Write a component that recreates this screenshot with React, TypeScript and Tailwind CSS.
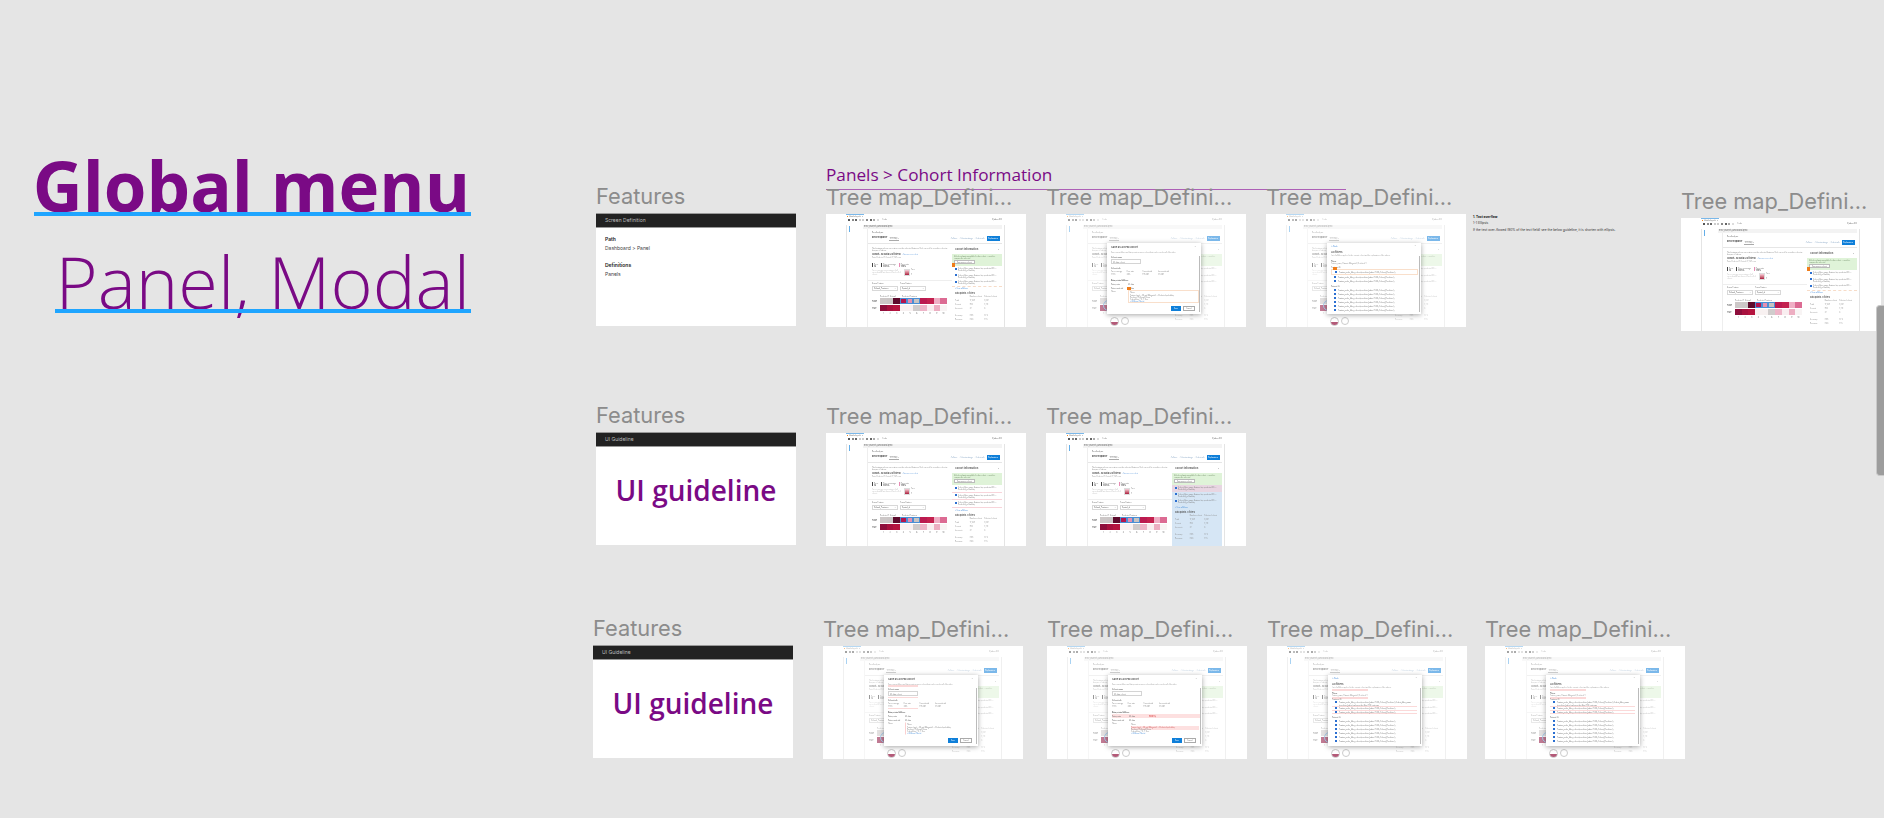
import type { ReactNode } from 'react';

const HEAT_TOP = ['bg-[#cdc8c8]', 'bg-[#cbc6c6]', 'bg-[#5e0b2c]', 'bg-[#b5134c]', 'bg-[#e58fb0]', 'bg-[#c6c3c3]', 'bg-[#bb1a50]', 'bg-[#c4214f]', 'bg-[#efafc5]', 'bg-[#dc6b93]'];
const HEAT_BOTTOM = ['bg-[#8e0f3c]', 'bg-[#a8123f]', 'bg-[#b5143f]', 'bg-[#f8f1f1]', 'bg-[#f8f1f1]', 'bg-[#d0cccc]', 'bg-[#eeb4c8]', 'bg-[#f9eef0]', 'bg-[#edaec2]', 'bg-[#f8f4f4]'];

type Panel = 'plain' | 'pink' | 'blue';
type Modal = 'none' | 'save' | 'savePink' | 'saveRed' | 'filters' | 'filtersPink';

function Toolbar() {
  return (
    <div className="flex h-[11px] flex-col">
      <div className="flex h-[4.5px] items-start pl-[20px]">
        <div className="flex h-[4px] w-[18px] items-center gap-[1px] border-t-[0.7px] border-t-[#7ab8ea] pl-[1px]">
          <span className="h-[1.5px] w-[1.5px] bg-[#f08a24]" />
          <span className="text-[1.8px] leading-none text-[#666]">Untitled.ipynb</span>
          <span className="ml-auto mr-[1px] text-[1.8px] leading-none text-[#222]">×</span>
        </div>
      </div>
      <div className="flex items-center gap-[1.6px] pl-[22px] pr-[24px]">
        {['bg-[#555]', 'bg-[#888]', 'bg-[#666]', 'bg-[#ccc]', 'bg-[#ccc]', 'bg-[#888]', 'bg-[#666]', 'bg-[#aaa]', 'bg-[#ddd]'].map((c, i) => (
          <span key={i} className={`h-[2px] w-[2px] ${c}`} />
        ))}
        <span className="ml-[2px] text-[1.8px] leading-none text-[#777]">Code</span>
        <span className="ml-auto text-[1.8px] leading-none text-[#555]">Python 3 ○</span>
      </div>
    </div>
  );
}

function Stat({ bar, label, value }: { bar: string; label: string; value: string }) {
  return (
    <div className={`flex flex-col border-l-[1px] pl-[1px] ${bar}`}>
      <span className="text-[1.8px] leading-[2.2px] text-[#777]">{label}</span>
      <span className="text-[1.9px] font-bold leading-[2.2px] text-[#444]">{value}</span>
    </div>
  );
}

function Heatmap() {
  return (
    <div className="mt-[4px] flex flex-col">
      <div className="flex pl-[8px]">
        <span className="w-[22px] text-[1.7px] leading-[3px] text-[#777]">Predicted Y (Actual)</span>
        <span className="text-[1.7px] leading-[3px] text-[#777]">Predicted Features</span>
      </div>
      <div className="flex items-center">
        <span className="w-[8px] shrink-0 text-[2px] font-medium text-[#555]">False</span>
        <div className="flex">
          {HEAT_TOP.map((c, i) => (
            <div key={i} className={`h-[6.5px] w-[6.7px] ${c} ${i >= 3 && i <= 5 ? 'border-[0.7px] border-[#4a8ed4]' : ''}`} />
          ))}
        </div>
      </div>
      <div className="mt-[0.5px] flex items-center">
        <span className="w-[8px] shrink-0 text-[2px] font-medium text-[#555]">True</span>
        <div className="flex">
          {HEAT_BOTTOM.map((c, i) => (
            <div key={i} className={`h-[6.5px] w-[6.7px] ${c}`} />
          ))}
        </div>
      </div>
      <div className="mt-[1.5px] flex pl-[8px]">
        {['1', '2', '3', '4', '5', '6', '7', '8', '9', '10'].map((n) => (
          <span key={n} className="w-[6.7px] text-center text-[1.8px] leading-none text-[#666]">{n}</span>
        ))}
      </div>
    </div>
  );
}

function CohortFilter({ pink, tag }: { pink?: boolean; tag?: boolean }) {
  return (
    <div className={`flex gap-[1.5px] px-[3px] py-[1.2px] ${pink ? 'border-b-[0.8px] border-b-[#f8d4da]' : ''} ${tag ? 'bg-[#e8d6e2]' : ''}`}>
      <span className="mt-[0.4px] h-[2.2px] w-[1.6px] shrink-0 bg-[#2b6fd1]" />
      <span className="text-[1.7px] leading-[2.1px] text-[#777]">Cohort_filter_name (feature) top predicted 34 — Predicted_probability</span>
    </div>
  );
}

function CohortPanel({ variant, dim }: { variant: Panel; dim?: boolean }) {
  const blue = variant === 'blue';
  return (
    <div className={`ml-auto flex w-[50px] shrink-0 flex-col ${blue ? 'bg-[#d6e6f5]' : 'bg-white'}`}>
      <div className="flex h-[10px] items-center justify-between bg-white px-[3px]">
        <span className="text-[2.5px] font-bold leading-[3px] text-[#555]">Cohort information</span>
        <span className="text-[2px] leading-none text-[#888]">×</span>
      </div>
      <div className="flex h-[12px] flex-col items-start bg-[#dff3d8] px-[2px] pt-[1px]">
        <span className="text-[1.6px] leading-[2px] text-[#6d8a66]">Global explanation available for this cohort — switch to compare the selected</span>
        <span className="mt-[1px] border-[0.5px] border-[#bbb] bg-white px-[2px] text-[1.6px] leading-[2px] text-[#666]">Save as new cohort</span>
      </div>
      <div className={`relative flex flex-col border-b-[0.5px] border-dashed pb-[0.5px] ${variant === 'plain' && !dim ? 'border-[#f7dcc8]' : 'border-transparent'}`}>
        {!dim && variant === 'plain' && <span className="absolute -top-[3px] left-0 h-[4px] w-[3px] bg-[#f07d1a]" />}
        <CohortFilter pink={variant === 'pink'} tag={blue} />
        <CohortFilter pink={variant === 'pink'} />
        <CohortFilter pink={variant === 'pink'} />
      </div>
      <span className="px-[3px] text-[1.7px] leading-[3px] text-[#3c87d8]">+ View all filters</span>
      <span className="px-[3px] text-[2px] font-bold leading-[6px] text-[#555]">Data points: 8 filters</span>
      <div className="grid grid-cols-3 gap-y-[2.1px] px-[3px] text-[1.7px] leading-[1.9px] text-[#888]">
        <span />
        <span>Baseline cohort</span>
        <span>Selected cohort</span>
        <span>Total</span>
        <span>12,560</span>
        <span>3,542</span>
        <span>Correct</span>
        <span>953</span>
        <span>1,231</span>
        <span>Incorrect</span>
        <span>32</span>
        <span>4</span>
        <span className="mt-[3px]">Accuracy</span>
        <span className="mt-[3px]">0.85</span>
        <span className="mt-[3px]">32%</span>
        <span>Precision</span>
        <span>0.34</span>
        <span>12%</span>
      </div>
    </div>
  );
}

function Workspace({ panel, dim }: { panel: Panel; dim?: boolean }) {
  return (
    <div className="ml-[20px] mr-[21px] flex min-h-0 flex-1 border-x-[0.7px] border-x-[#e4e4e4] pr-[2.5px]">
      <div className="flex w-[20px] shrink-0 flex-col pl-[1.5px] pt-[0.5px]">
        <span className="h-[6px] w-[1px] bg-[#63aee8]" />
      </div>
      <div className="flex min-w-0 flex-1 flex-col border-l-[0.5px] border-l-[#eee]">
        <div className="-ml-[5px] flex h-[4px] items-center bg-[#f3f3f3] pl-[1px]">
          <span className="text-[1.9px] leading-none text-[#666]">Error_analysis_dashboard.ipynb</span>
        </div>
        <div className="px-[4px] pt-[1.5px] text-[1.8px] leading-[3.5px] text-[#666]">ErrorAnalysis</div>
        <div className="flex h-[10px] items-center gap-[2px] border-b-[0.7px] border-b-[#e6e6e6] px-[4px]">
          <span className="text-[2.3px] font-bold leading-none text-[#444]">Error explorer</span>
          <span className="border-b-[0.5px] border-b-[#aaa] text-[1.9px] leading-[3px] text-[#888]">Treemap ⌄</span>
          <div className="ml-auto flex items-center gap-[2px] text-[1.7px] leading-none text-[#7b9dbf]">
            <span>▫ Full tree</span>
            <span>▫ Cohort settings</span>
            <span>▫ Cohort info</span>
          </div>
          <span className="-mr-[2px] bg-[#0f7fd9] px-[1.5px] py-[1px] text-[1.8px] leading-[2.8px] text-white">Explanation</span>
        </div>
        <div className="flex min-h-0 flex-1">
          <div className="flex w-[84px] shrink-0 flex-col px-[4px] pt-[3px]">
            <span className="text-[1.7px] leading-[2.2px] text-[#888]">This heatmap shows error rates over the selected features. Click on a cell to view the cohort in this pair of values.</span>
            <div className="mt-[2px] flex items-center gap-[1.5px]">
              <span className="text-[2.2px] font-bold leading-[3px] text-[#444]">Cohort: All Data (26 filters)</span>
              <span className="text-[1.6px] leading-none text-[#6ba2e0]">▫ Save as new cohort</span>
            </div>
            <span className="text-[1.6px] leading-[2px] text-[#999]">Data: Predicted Y (Actual) 12,560 rows</span>
            <div className="mt-[4.5px] flex gap-[3px]">
              <Stat bar="border-[#444]" label="Error" value="12" />
              <Stat bar="border-[#444]" label="Error coverage" value="84.5%" />
              <Stat bar="border-[#e88bb4]" label="Error rate" value="17.5%" />
            </div>
            <div className="mt-[1.7px] flex gap-[2px]">
              <span className="w-[30px] text-[1.6px] leading-[2px] text-[#bbb]">Error coverage is percentage of all errors that fall into this selected cell of cohort.</span>
              <div className="flex items-center gap-[1px]">
                <span className="h-[7px] w-[6px] border-[0.5px] border-[#ddd] bg-gradient-to-b from-[#f5d0dc] to-[#a81240]" />
                <span className="flex h-[7px] flex-col justify-between text-[1.6px] leading-none text-[#777]">
                  <span>Error</span>
                  <span>0</span>
                </span>
              </div>
            </div>
            <div className="-mx-[4px] mt-[3.5px] border-t-[0.7px] border-t-[#eee] px-[4px] pt-[1.5px]">
              <div className="flex gap-[2px]">
                <div className="flex w-[26px] flex-col gap-[1.5px]">
                  <span className="text-[1.7px] leading-[2.4px] text-[#666]">X-axis Feature</span>
                  <span className="flex h-[5px] items-center justify-between border-[0.5px] border-[#d8d8d8] px-[1px] text-[1.8px] text-[#666]">
                    <span>Default_Features</span>
                    <span>⌄</span>
                  </span>
                </div>
                <div className="flex w-[26px] flex-col gap-[1.5px]">
                  <span className="text-[1.7px] leading-[2.4px] text-[#666]">Y-axis Feature</span>
                  <span className="flex h-[5px] items-center justify-between border-[0.5px] border-[#d8d8d8] px-[1px] text-[1.8px] text-[#666]">
                    <span>Spatial_id</span>
                    <span>⌄</span>
                  </span>
                </div>
              </div>
              <Heatmap />
            </div>
          </div>
          <CohortPanel variant={panel} dim={dim} />
        </div>
      </div>
    </div>
  );
}

function PinkBar({ className = '' }: { className?: string }) {
  return <div className={`relative top-[0.5px] -mb-[1.5px] h-[1.5px] bg-[#fbd9d9] ${className}`} />;
}

function SaveModal({ pink, red }: { pink?: boolean; red?: boolean }) {
  return (
    <>
      <div className="flex items-start justify-between pt-[1px]">
        <span className="text-[2.6px] font-bold leading-[3.5px] text-[#555]">Save as a new cohort</span>
        <span className="text-[2.4px] leading-none text-[#999]">×</span>
      </div>
      <span className="mt-[1px] block text-[1.6px] leading-[2.4px] text-[#999]">Save current filters and data points as a new cohort that can be used in all of the tabs.</span>
      {pink && <PinkBar className="w-[30px]" />}
      <span className="mt-[3.5px] block text-[1.8px] font-medium leading-[2.4px] text-[#555]">Cohort name</span>
      <span className="mt-[0.5px] block h-[5px] w-[30px] border-[0.5px] border-[#d4d4d4] px-[1px] text-[1.7px] leading-[4px] text-[#777]">All data cohort</span>
      {pink && <PinkBar className="w-[30px]" />}
      <span className="mt-[3px] block text-[1.8px] font-medium leading-[2.4px] text-[#555]">Cohort info</span>
      <div className="mt-[0.5px] grid w-[63px] grid-cols-4 text-[1.6px] leading-[2.4px] text-[#777]">
        <span>Error coverage</span>
        <span>Error rate</span>
        <span>Correct/total</span>
        <span>Incorrect/total</span>
        <span>12.5%</span>
        <span>34%</span>
        <span>120/340</span>
        <span>32/340</span>
      </div>
      {pink && <PinkBar className="w-[30px]" />}
      <span className="mt-[4px] block text-[1.8px] font-bold leading-[2.4px] text-[#555]">Data points & filters</span>
      <div className={`mt-[1px] -mr-[3px] flex text-[1.7px] leading-[4px] text-[#666] ${red ? 'bg-[#fde0e0]' : ''}`}>
        <span className="w-[17px]">Data points</span>
        <span>All data</span>
        {red && <span className="ml-[14px] text-[2.6px] font-bold leading-[4px] text-[#e05050]">100%</span>}
      </div>
      <div className="relative flex text-[1.7px] leading-[4px] text-[#666]">
        <span className="w-[17px]">Data rows/total</span>
        <span>All data</span>
        {!pink && !red && <span className="absolute left-[16px] top-[0.5px] h-[3.5px] w-[3.5px] bg-[#f07d1a]" />}
      </div>
      <div className="flex text-[1.6px] leading-[2.2px] text-[#777]">
        <span className="w-[17px]">Filters</span>
        <div className={`-mr-[3px] flex-1 border-[0.5px] pl-[1px] ${pink ? 'border-transparent border-l-[#fbd0d0]' : red ? 'border-transparent' : 'border-[#f9dfcb]'}`}>
          <span className="block">Filters</span>
          <span className={`block ${red ? 'bg-[#fde0e0] text-[#c55]' : ''}`}>Feature (age) &lt; 34 and (Mitigated) — Predicted probability</span>
          <span className={`block ${red ? 'bg-[#fde0e0]' : ''}`}>Predicted Y (Actual) Filters</span>
          <span className="block">Cohort filter 2, 4, 5 True</span>
          <span className="block text-[#3c87d8]">+ All filters (Filters)</span>
        </div>
      </div>
      <div className="mt-auto flex justify-end gap-[2px] pb-[1px] pr-[1px]">
        <span className="w-[10px] bg-[#0f7fd9] text-center text-[1.7px] leading-[4.5px] text-white">Save</span>
        <span className="w-[12px] border-[0.5px] border-[#aaa] text-center text-[1.7px] leading-[3.5px] text-[#666]">Cancel</span>
      </div>
    </>
  );
}

function FilterRow({ pink, long }: { pink?: boolean; long?: boolean }) {
  return (
    <div className={`flex items-start gap-[2px] pl-[3px] ${pink ? 'border-b-[1.5px] border-b-[#fbd9d9]' : ''}`}>
      <span className={`h-[2px] w-[2px] shrink-0 bg-[#2b6fd1] ${pink ? 'mt-[0.3px]' : 'mt-[1px]'}`} />
      <span className={`min-w-0 text-[1.7px] text-[#666] ${pink ? 'leading-[2.5px]' : 'leading-[4px]'}`}>
        Feature_index_filter_cohort (predicted_value) 0.34 [ Cohort_Predicted ]
        {long && ' Cohort_filter_name (predicted_value) values in the filter 0.34 outcome'}
      </span>
    </div>
  );
}

function FiltersModal({ pink, orange }: { pink?: boolean; orange?: boolean }) {
  return (
    <>
      <div className="flex items-center justify-between">
        <span className="text-[1.8px] leading-[3px] text-[#3c87d8]">← Back</span>
        <span className="text-[2.4px] leading-none text-[#999]">×</span>
      </div>
      <span className="mt-[3px] block text-[2.6px] font-bold leading-[3.4px] text-[#555]">All filters</span>
      <span className="block text-[1.6px] leading-[2.4px] text-[#999]">List of all filters applied to the current cohort and the explanation of the values.</span>
      {pink && <PinkBar className="w-[36px]" />}
      <span className="mt-[3px] block text-[1.8px] font-medium leading-[2.6px] text-[#555]">Filters</span>
      <span className="block text-[1.6px] leading-[2.4px] text-[#888]">Feature_name, Dataset (Mitigated), Predicted Y</span>
      {pink && <PinkBar className="w-[36px]" />}
      <div className="relative mt-[1.5px]">
        {orange && <span className="absolute top-[0.5px] left-[2px] h-[3.5px] w-[3.5px] bg-[#f07d1a]" />}
        <span className="block text-[1.7px] leading-[2.8px] text-[#666]">Features (3)</span>
        <div className={orange ? '-mr-[2px] border-[0.5px] border-[#f9dfcb]' : ''}>
          <FilterRow pink={pink} long={pink} />
        </div>
        <FilterRow pink={pink} />
        <FilterRow pink={pink} />
      </div>
      <span className="mt-[2px] block text-[1.7px] leading-[2.8px] text-[#666]">Dataset (6)</span>
      {[0, 1, 2, 3, 4, 5].map((i) => (
        <FilterRow key={i} />
      ))}
    </>
  );
}

function ModalLayer({ modal }: { modal: Modal }) {
  return (
    <>
      {/* page behind the dialog is faded */}
      <div className="absolute inset-0 bg-white/45" />
      <div className="absolute left-[56.5px] top-[86px] h-[11px] w-[11px] rounded-full border-[0.6px] border-[#a9cdec]" />
      <div className="absolute left-[64px] top-[103px] h-[9px] w-[9px] overflow-hidden rounded-full border-[0.6px] border-[#c9c9c9]">
        <div className="mt-[4px] h-[5px] bg-[#b35a78]" />
      </div>
      <div className="absolute left-[75px] top-[103px] h-[8px] w-[8px] rounded-full border-[0.6px] border-[#ccc]" />
      <div className="absolute left-[61px] top-[29px] flex h-[71px] w-[94px] flex-col overflow-hidden bg-white py-[2px] pl-[4px] pr-[5px] shadow-[0_1px_5px_rgba(0,0,0,0.35)]">
        {modal === 'save' && <SaveModal />}
        {modal === 'savePink' && <SaveModal pink />}
        {modal === 'saveRed' && <SaveModal red />}
        {modal === 'filters' && <FiltersModal orange />}
        {modal === 'filtersPink' && <FiltersModal pink />}
        <span className="absolute right-[1px] top-[13px] h-[56px] w-[0.8px] bg-[#bbb]" />
      </div>
    </>
  );
}

function Thumb({ panel = 'plain', modal = 'none' }: { panel?: Panel; modal?: Modal }) {
  return (
    <div className="relative flex h-[113px] w-[200px] flex-col overflow-hidden bg-white font-['Inter',sans-serif] blur-[0.2px]">
      <Toolbar />
      <Workspace panel={panel} dim={modal !== 'none'} />
      {modal !== 'none' && <ModalLayer modal={modal} />}
    </div>
  );
}

function Frame({ pos, label, children }: { pos: string; label: string; children: ReactNode }) {
  return (
    <div className={`absolute flex w-[200px] flex-col ${pos}`}>
      <span className="mb-[3px] font-['Inter',sans-serif] text-[21.8px] leading-[27px] whitespace-nowrap text-[#8c8c8c]">{label}</span>
      {children}
    </div>
  );
}

function DefinitionBox() {
  return (
    <div className="flex h-[113px] w-[200px] flex-col bg-white font-['Inter',sans-serif]">
      <div className="flex h-[15px] items-center border-y-[0.5px] border-y-[#999] bg-[#222222] pl-[9px] text-[5px] text-[#bdbdbd]">Screen Definition</div>
      <div className="flex flex-col pl-[9px] pt-[7px] text-[5px] leading-[9px] text-[#444]">
        <span className="font-semibold text-[#222]">Path</span>
        <span>Dashboard &gt; Panel</span>
        <span className="mt-[8px] font-semibold text-[#222]">Definitions</span>
        <span>Panels</span>
      </div>
    </div>
  );
}

function GuidelineBox() {
  return (
    <div className="flex h-[113px] w-[200px] flex-col bg-white font-['Inter',sans-serif]">
      <div className="flex h-[15px] items-center border-y-[0.5px] border-y-[#999] bg-[#222222] pl-[9px] text-[5px] text-[#bdbdbd]">UI Guideline</div>
      <div className="flex flex-1 items-center justify-center pb-[12px] font-['Open_Sans',sans-serif] text-[28px] font-semibold text-[#7a0a85]">UI guideline</div>
    </div>
  );
}

export default function App() {
  return (
    <div className="relative h-[818px] w-full overflow-hidden bg-[#e5e5e5] font-['Open_Sans',sans-serif]">
      {/* section titles */}
      <div className="absolute left-[34px] top-[150px] flex w-[437px] flex-col items-end">
        <span className="pr-[1px] text-[69px] leading-[70px] font-bold whitespace-nowrap text-[#7a0a85]">Global menu</span>
        <div className="-mt-[8px] h-[4px] w-full bg-[#1fa5ff]" />
        <span className="mt-[25px] pr-[1px] text-[72px] leading-[80px] font-light whitespace-nowrap text-[#7a0a85]">Panel, Modal</span>
        <div className="-mt-[12px] h-[4px] w-[416px] bg-[#1fa5ff]" />
      </div>

      <div className="absolute left-[826px] top-[162px] w-[520px] border-b border-b-[#ad5fb6] pb-[1px] text-[17.2px] leading-[26px] font-medium text-[#7a0a85]">Panels &gt; Cohort Information</div>

      {/* row 1 */}
      <Frame pos="left-[596px] top-[183px]" label="Features"><DefinitionBox /></Frame>
      <Frame pos="left-[826px] top-[184px]" label="Tree map_Defini..."><Thumb /></Frame>
      <Frame pos="left-[1046px] top-[184px]" label="Tree map_Defini..."><Thumb modal="save" /></Frame>
      <Frame pos="left-[1266px] top-[184px]" label="Tree map_Defini..."><Thumb modal="filters" /></Frame>
      <div className="absolute left-[1473px] top-[214px] flex flex-col font-['Inter',sans-serif] text-[3.2px] leading-[6.3px] text-[#333]">
        <span className="font-bold text-[#111]">1. Text overflow</span>
        <span>1-1 Ellipsis</span>
        <span>If the text over-flowed (90% of the text field) see the below guideline, it is shorten with ellipsis.</span>
      </div>
      <Frame pos="left-[1681px] top-[188px]" label="Tree map_Defini..."><Thumb /></Frame>

      {/* row 2 */}
      <Frame pos="left-[596px] top-[402px]" label="Features"><GuidelineBox /></Frame>
      <Frame pos="left-[826px] top-[403px]" label="Tree map_Defini..."><Thumb panel="pink" /></Frame>
      <Frame pos="left-[1046px] top-[403px]" label="Tree map_Defini..."><Thumb panel="blue" /></Frame>

      {/* row 3 */}
      <Frame pos="left-[593px] top-[615px]" label="Features"><GuidelineBox /></Frame>
      <Frame pos="left-[823px] top-[616px]" label="Tree map_Defini..."><Thumb modal="savePink" /></Frame>
      <Frame pos="left-[1047px] top-[616px]" label="Tree map_Defini..."><Thumb modal="saveRed" /></Frame>
      <Frame pos="left-[1267px] top-[616px]" label="Tree map_Defini..."><Thumb modal="filtersPink" /></Frame>
      <Frame pos="left-[1485px] top-[616px]" label="Tree map_Defini..."><Thumb modal="filtersPink" /></Frame>

      {/* canvas scrollbar */}
      <div className="absolute right-0 top-[305px] h-[171px] w-[8px] rounded-l-[4px] border border-r-0 border-[#c9c9c9] bg-[#9d9d9d]" />
    </div>
  );
}
